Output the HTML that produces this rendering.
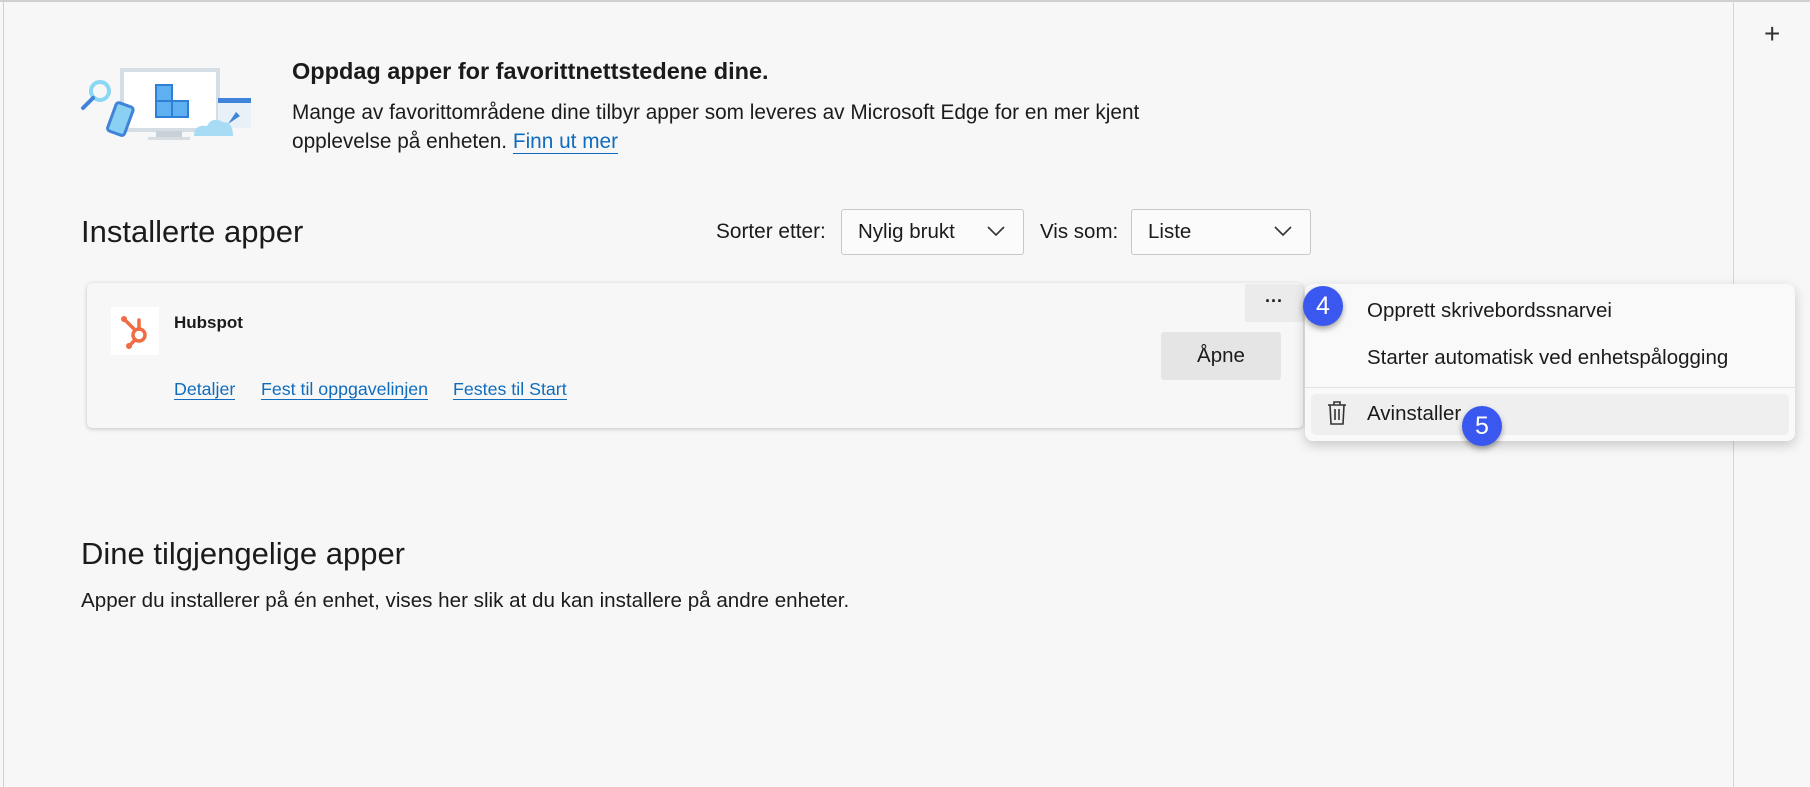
<!DOCTYPE html>
<html><head><meta charset="utf-8">
<style>
html,body{margin:0;padding:0}
body{width:1810px;height:787px;background:#f7f7f7;position:relative;overflow:hidden;font-family:"Liberation Sans",Arial,sans-serif;color:#1b1b1b}
.a{position:absolute;white-space:nowrap}
a{color:#0f6cbd;text-decoration:none;border-bottom:1.5px solid #0f6cbd}
.dd{position:absolute;height:46px;border:1px solid #c8c8c8;border-radius:3px;background:#fbfbfb;box-sizing:border-box;font-size:20.5px;line-height:44px;padding-left:16px}
.dd svg{position:absolute;right:18px;top:16px}
.badge{position:absolute;width:40px;height:40px;border-radius:50%;background:#3a57f0;color:#fff;font-size:25px;line-height:40px;text-align:center;box-shadow:0 3px 6px rgba(0,0,0,.35)}
</style></head><body>
<div class="a" style="left:0;top:0;width:1810px;height:2px;background:#d0d0d0"></div>
<div class="a" style="left:3px;top:0;width:1px;height:787px;background:#d0d0d0"></div>
<div class="a" style="left:1733px;top:0;width:1px;height:787px;background:#d6d6d6"></div>
<div class="a" style="left:1764px;top:18px;font-size:28px;font-weight:300;color:#333">+</div>

<svg class="a" style="left:70px;top:40px" width="200" height="110" viewBox="0 0 200 110">
<rect x="52" y="30" width="96" height="60" fill="#fff" stroke="#d5dde5" stroke-width="4"/>
<rect x="86" y="91" width="26" height="7" fill="#c8d0d8"/><rect x="78" y="97" width="42" height="3" fill="#d8dde2"/>
<rect x="86" y="45" width="16" height="16" fill="#5fb0f0" stroke="#2f7fd6" stroke-width="2"/>
<rect x="86" y="61" width="16" height="16" fill="#5fb0f0" stroke="#2f7fd6" stroke-width="2"/>
<rect x="102" y="61" width="16" height="16" fill="#5fb0f0" stroke="#2f7fd6" stroke-width="2"/>
<circle cx="30" cy="51" r="9" fill="none" stroke="#8ad6f5" stroke-width="4"/>
<line x1="23" y1="58" x2="13" y2="68" stroke="#3f84d8" stroke-width="4" stroke-linecap="round"/>
<g transform="rotate(20 50 80)"><rect x="41" y="64" width="18" height="30" rx="3" fill="#8ad0f3" stroke="#3f84d8" stroke-width="3"/></g>
<rect x="148" y="58" width="33" height="30" fill="#e8f0f8"/><rect x="148" y="58" width="33" height="5" fill="#3f84d8"/>
<path d="M158 84 L166 72 L170 76 Z" fill="#3f84d8"/>
<path d="M124 96 q0-12 13-10 q5-10 16-4 q10 0 10 14 Z" fill="#a8dcf5"/>
</svg>

<div class="a" style="left:292px;top:58px;font-size:23.5px;font-weight:bold">Oppdag apper for favorittnettstedene dine.</div>
<div class="a" style="left:292px;top:98px;font-size:20.8px;line-height:29px">Mange av favorittområdene dine tilbyr apper som leveres av Microsoft Edge for en mer kjent<br>opplevelse på enheten. <a>Finn ut mer</a></div>

<div class="a" style="left:81px;top:214px;font-size:31px">Installerte apper</div>
<div class="a" style="left:716px;top:220px;font-size:20.8px">Sorter etter:</div>
<div class="dd" style="left:841px;top:209px;width:183px">Nylig brukt<svg width="18" height="11"><path d="M1 1 L9 9 L17 1" fill="none" stroke="#333" stroke-width="1.6"/></svg></div>
<div class="a" style="left:1040px;top:220px;font-size:20.5px">Vis som:</div>
<div class="dd" style="left:1131px;top:209px;width:180px">Liste<svg width="18" height="11"><path d="M1 1 L9 9 L17 1" fill="none" stroke="#333" stroke-width="1.6"/></svg></div>

<div class="a" style="left:87px;top:283px;width:1216px;height:145px;background:#f7f7f7;border-radius:5px;box-shadow:0 1px 4px rgba(0,0,0,.22)"></div>
<div class="a" style="left:111px;top:307px;width:48px;height:48px;background:#fff"></div>
<svg class="a" style="left:111px;top:307px" width="48" height="48" viewBox="0 0 48 48">
<g stroke="#f16b44" stroke-width="3.5" fill="none" stroke-linecap="round"><circle cx="28" cy="28" r="6"/><line x1="24" y1="23" x2="14" y2="13"/><line x1="28" y1="22" x2="28" y2="13"/><line x1="24" y1="33" x2="19" y2="38"/></g>
<circle cx="13" cy="12" r="3" fill="#f16b44"/><circle cx="18" cy="39" r="3" fill="#f16b44"/>
</svg>
<div class="a" style="left:174px;top:313px;font-size:17px;font-weight:bold">Hubspot</div>
<div class="a" style="left:174px;top:379px;font-size:17.8px"><a>Detaljer</a></div>
<div class="a" style="left:261px;top:379px;font-size:17.8px"><a>Fest til oppgavelinjen</a></div>
<div class="a" style="left:453px;top:379px;font-size:17.8px"><a>Festes til Start</a></div>
<div class="a" style="left:1245px;top:284px;width:58px;height:38px;background:#ebebeb;text-align:center;font-size:18px;font-weight:bold;line-height:34px">···</div>
<div class="a" style="left:1161px;top:332px;width:120px;height:48px;background:#e5e5e5;border-radius:3px;text-align:center;line-height:48px;font-size:20.5px">Åpne</div>

<div class="a" style="left:1305px;top:284px;width:490px;height:157px;background:#f9f9f9;border-radius:8px;box-shadow:0 4px 12px rgba(0,0,0,.2)"></div>
<div class="a" style="left:1367px;top:299px;font-size:20.5px">Opprett skrivebordssnarvei</div>
<div class="a" style="left:1367px;top:346px;font-size:20.5px">Starter automatisk ved enhetspålogging</div>
<div class="a" style="left:1305px;top:387px;width:490px;height:1px;background:#e3e3e3"></div>
<div class="a" style="left:1311px;top:394px;width:478px;height:41px;background:#efefef;border-radius:5px"></div>
<svg class="a" style="left:1326px;top:400px" width="22" height="26" viewBox="0 0 22 26"><g fill="none" stroke="#333" stroke-width="1.6"><path d="M2 5 H20 M8 5 V2 H14 V5 M4 5 L5 24 H17 L18 5 M9 9 V20 M13 9 V20"/></g></svg>
<div class="a" style="left:1367px;top:402px;font-size:20.5px">Avinstaller</div>
<div class="badge" style="left:1303px;top:286px">4</div>
<div class="badge" style="left:1462px;top:406px">5</div>

<div class="a" style="left:81px;top:536px;font-size:31px">Dine tilgjengelige apper</div>
<div class="a" style="left:81px;top:589px;font-size:20.6px">Apper du installerer på én enhet, vises her slik at du kan installere på andre enheter.</div>
</body></html>
